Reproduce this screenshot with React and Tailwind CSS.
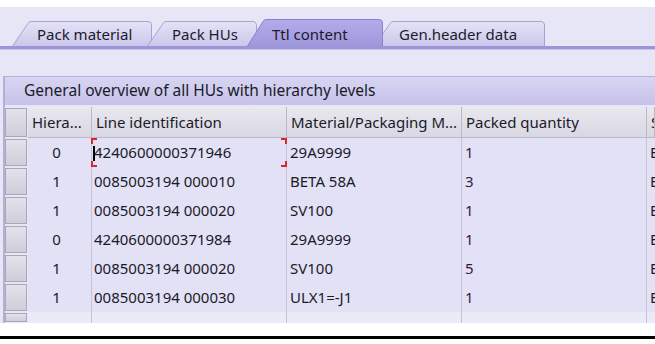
import React from "react";

const font = { fontFamily: '"Noto Sans", "DejaVu Sans", sans-serif' };

function Tab({ label, left, width, active, z }) {
  const h = active ? 27 : 25;
  return (
    <div
      className="absolute bottom-0"
      style={{ left, width, height: h, zIndex: z }}
    >
      <svg className="absolute inset-0" width={width} height={h} viewBox={`0 0 ${width} ${h}`}>
        <defs>
          <linearGradient id={`g${left}`} x1="0" y1="0" x2="0" y2="1">
            <stop offset="0" stopColor={active ? "#b3acea" : "#e4e2f6"} />
            <stop offset="1" stopColor={active ? "#9f97dc" : "#cbc7ec"} />
          </linearGradient>
        </defs>
        <path
          d={`M0.5 ${h} L16 2.5 Q17 0.5 19 0.5 L${width - 4} 0.5 Q${width - 0.5} 0.5 ${width - 0.5} 4 L${width - 0.5} ${h}`}
          fill={`url(#g${left})`}
          stroke={active ? "#8a82cc" : "#a8a2d4"}
          strokeWidth="1"
        />
      </svg>
      <span
        className="absolute text-[15px] text-[#1b1b2b] leading-none whitespace-nowrap"
        style={{ left: 25, top: active ? 8 : 6 }}
      >
        {label}
      </span>
    </div>
  );
}

const rows = [
  ["0", "4240600000371946", "29A9999", "1"],
  ["1", "0085003194 000010", "BETA 58A", "3"],
  ["1", "0085003194 000020", "SV100", "1"],
  ["0", "4240600000371984", "29A9999", "1"],
  ["1", "0085003194 000020", "SV100", "5"],
  ["1", "0085003194 000030", "ULX1=-J1", "1"],
];

const cols = "grid grid-cols-[23px_64px_195px_175px_185px_1fr]";

function Selector() {
  return (
    <div className="border border-[#a9a7ba] bg-gradient-to-b from-[#e3e2ea] to-[#cfcdd9] mr-[1px] my-[1px]" />
  );
}

export default function App() {
  return (
    <div className="w-[655px] h-[344px] bg-white overflow-hidden relative" style={font}>
      <div className="mt-[7px] h-[316px] bg-[#e7e6f6] flex flex-col">
        {/* tab strip */}
        <div className="relative h-[39px] shrink-0">
          <Tab label="Pack material" left={12} width={140} z={1} />
          <Tab label="Pack HUs" left={147} width={110} z={2} />
          <Tab label="Ttl content" left={247} width={136} active z={4} />
          <Tab label="Gen.header data" left={374} width={171} z={3} />
        </div>
        <div className="h-[3px] bg-[#9c95d6] shrink-0" />
        <div className="h-[1px] bg-[#c9c5ec] shrink-0" />
        <div className="h-[26px] shrink-0" />
        {/* table */}
        <div className="ml-[3px] flex-1 border-l-2 border-[#b3b0d6] flex flex-col overflow-hidden">
          <div className="h-[29px] shrink-0 bg-gradient-to-b from-[#d8d5f2] to-[#c6c2ea] border-t border-[#b5b1e0] flex items-center pl-[19px] text-[15.5px] text-[#1a1a2a] whitespace-nowrap">
            General overview of all HUs with hierarchy levels
          </div>
          <div className="h-[2px] bg-[#e7e6f6] shrink-0" />
          {/* header row */}
          <div className={`${cols} h-[31px] shrink-0 text-[15px] text-[#1a1a2a]`}>
            <Selector />
            {["Hiera...", "Line identification", "Material/Packaging M...", "Packed quantity", "S"].map((h, i) => (
              <div
                key={i}
                className="bg-gradient-to-b from-[#e9e8ee] to-[#d9d7e2] border-r border-b border-[#b9b7c8] flex items-center pl-[4px] whitespace-nowrap overflow-hidden"
              >
                {h}
              </div>
            ))}
          </div>
          {/* data rows */}
          {rows.map((r, ri) => (
            <div key={ri} className={`${cols} h-[29px] shrink-0 text-[15px] text-[#1a1a2a]`}>
              <Selector />
              <div className="bg-[#e3e1f5] border-r border-[#c5c3d6] flex items-center justify-center pr-[6px]">
                {r[0]}
              </div>
              <div className="relative bg-[#e3e1f5] border-r border-[#c5c3d6] flex items-center pl-[2px] whitespace-nowrap">
                {r[1]}
                {ri === 0 && (
                  <>
                    <span className="absolute left-[-1px] top-0 w-[6px] h-[6px] border-l-2 border-t-2 border-[#d8262a]" />
                    <span className="absolute right-[-1px] top-0 w-[6px] h-[6px] border-r-2 border-t-2 border-[#d8262a]" />
                    <span className="absolute left-[-1px] bottom-0 w-[6px] h-[6px] border-l-2 border-b-2 border-[#d8262a]" />
                    <span className="absolute right-[-1px] bottom-0 w-[6px] h-[6px] border-r-2 border-b-2 border-[#d8262a]" />
                    <span className="absolute left-[1px] top-[8px] w-[2px] h-[15px] bg-black" />
                  </>
                )}
              </div>
              <div className="bg-[#e3e1f5] border-r border-[#c5c3d6] flex items-center pl-[3px] whitespace-nowrap">
                {r[2]}
              </div>
              <div className="bg-[#e3e1f5] border-r border-[#c5c3d6] flex items-center pl-[3px] text-[#3a1838]">
                {r[3]}
              </div>
              <div className="bg-[#e3e1f5] flex items-center pl-[3px] overflow-hidden">E</div>
            </div>
          ))}
          {/* trailing partial row */}
          <div className={`${cols} flex-1`}>
            <Selector />
            <div className="bg-[#ebeaf7] border-r border-[#c5c3d6]" />
            <div className="bg-[#ebeaf7] border-r border-[#c5c3d6]" />
            <div className="bg-[#ebeaf7] border-r border-[#c5c3d6]" />
            <div className="bg-[#ebeaf7] border-r border-[#c5c3d6]" />
            <div className="bg-[#ebeaf7]" />
          </div>
        </div>
      </div>
      <div className="mt-[13px] h-[3px] bg-black" />
    </div>
  );
}
